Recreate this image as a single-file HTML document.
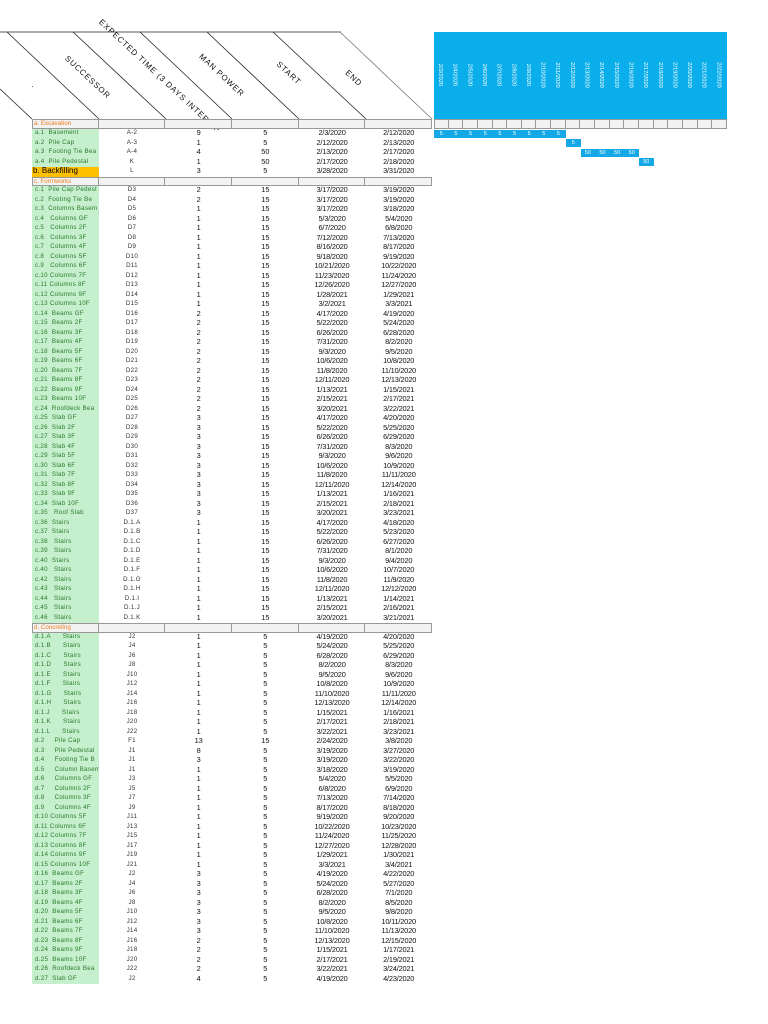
<!DOCTYPE html>
<html><head><meta charset="utf-8">
<style>
*{margin:0;padding:0;box-sizing:border-box}
body{width:768px;height:1024px;background:#fff;position:relative;overflow:hidden;font-family:"Liberation Sans",sans-serif}
#rows{position:absolute;left:32px;top:129px;width:400px}
.r{height:9.5px;display:flex;line-height:8px;white-space:pre}
.r span{width:66.7px;text-align:center;font-size:7.4px;color:#111;display:block}
.r span:nth-child(1){text-align:left;background:#c6efce;color:#2a7a2a;font-size:6.2px;padding-left:3px;letter-spacing:.3px;overflow:hidden}
.r span:nth-child(2){font-size:6.2px;color:#333;letter-spacing:.3px}
.r span:nth-child(5),.r span:nth-child(6){font-size:7.4px;letter-spacing:-.2px}
.h{height:9.5px;display:flex}
.h span{width:66.7px;height:9.5px;border:1px solid #999;background:#f2f2f2;font-size:6.2px;color:#f07d1e;line-height:7.5px;padding-left:1px;display:block}
.h span+span{border-left:none}
.r span.bf{background:#ffc000;color:#000;font-size:8px;padding-left:1px;letter-spacing:0}
#gh{position:absolute;left:434px;top:119px;display:flex}
#gh div{width:14.65px;height:10px;border:1px solid #999;border-left:none;background:#f2f2f2}
#gh div:first-child{border-left:1px solid #999}
.g{position:absolute;height:8px;background:#14a9e6;color:#fff;font-size:5.5px;line-height:8px;display:flex}
.g div{width:14.65px;text-align:center}
</style></head><body>
<svg width="768" height="130" style="position:absolute;left:0;top:0" xmlns="http://www.w3.org/2000/svg">
<rect x="434" y="32" width="293" height="87" fill="#0aaeea"/>
<g stroke="#222" stroke-width="0.8" fill="none">
<line x1="0" y1="32" x2="341" y2="32"/>
<line x1="0" y1="89" x2="32" y2="119"/>
<line x1="7" y1="32" x2="99" y2="119"/>
<line x1="73" y1="32" x2="166" y2="119"/>
<line x1="140" y1="32" x2="232" y2="119"/>
<line x1="207" y1="32" x2="299" y2="119"/>
<line x1="273" y1="32" x2="366" y2="119"/>
<line x1="340" y1="32" x2="432" y2="119" stroke="#777"/>
</g>
<g font-family="Liberation Sans" font-size="8" fill="#111" text-anchor="middle" letter-spacing="0.9">
<text x="0" y="0" transform="translate(86,79) rotate(43)">SUCCESSOR</text>
<text x="0" y="0" transform="translate(160,80) rotate(43)">EXPECTED TIME (3 DAYS INTERVAL)</text>
<text x="0" y="0" transform="translate(220,77) rotate(43)">MAN POWER</text>
<text x="0" y="0" transform="translate(287,75) rotate(43)">START</text>
<text x="0" y="0" transform="translate(352,80) rotate(43)">END</text>
<text x="33" y="87">.</text>
</g>
<g font-family="Liberation Sans" font-size="5.8" fill="#fff" text-anchor="middle">
<text transform="translate(439,75) rotate(90)">2/3/2020</text>
<text transform="translate(453.6,75) rotate(90)">2/4/2020</text>
<text transform="translate(468.3,75) rotate(90)">2/5/2020</text>
<text transform="translate(483,75) rotate(90)">2/6/2020</text>
<text transform="translate(497.6,75) rotate(90)">2/7/2020</text>
<text transform="translate(512.3,75) rotate(90)">2/8/2020</text>
<text transform="translate(526.9,75) rotate(90)">2/9/2020</text>
<text transform="translate(541.6,75) rotate(90)">2/10/2020</text>
<text transform="translate(556.2,75) rotate(90)">2/11/2020</text>
<text transform="translate(570.9,75) rotate(90)">2/12/2020</text>
<text transform="translate(585.5,75) rotate(90)">2/13/2020</text>
<text transform="translate(600.2,75) rotate(90)">2/14/2020</text>
<text transform="translate(614.8,75) rotate(90)">2/15/2020</text>
<text transform="translate(629.5,75) rotate(90)">2/16/2020</text>
<text transform="translate(644.1,75) rotate(90)">2/17/2020</text>
<text transform="translate(658.8,75) rotate(90)">2/18/2020</text>
<text transform="translate(673.4,75) rotate(90)">2/19/2020</text>
<text transform="translate(688.1,75) rotate(90)">2/20/2020</text>
<text transform="translate(702.7,75) rotate(90)">2/21/2020</text>
<text transform="translate(717.4,75) rotate(90)">2/22/2020</text>
</g>
</svg>
<div id="gh"><div></div><div></div><div></div><div></div><div></div><div></div><div></div><div></div><div></div><div></div><div></div><div></div><div></div><div></div><div></div><div></div><div></div><div></div><div></div><div></div></div>
<div class="g" style="left:434px;top:129.5px"><div>5</div><div>5</div><div>5</div><div>5</div><div>5</div><div>5</div><div>5</div><div>5</div><div>5</div></div>
<div class="g" style="left:566px;top:139px"><div>5</div></div>
<div class="g" style="left:580.5px;top:148.5px"><div>50</div><div>50</div><div>50</div><div>50</div></div>
<div class="g" style="left:639px;top:158px"><div>50</div></div>

<div class="h" style="position:absolute;left:32px;top:119px"><span>a. Excavation</span><span></span><span></span><span></span><span></span><span></span></div>
<div id="rows">
<div class="r"><span>a.1  Basement</span><span>A-2</span><span>9</span><span>5</span><span>2/3/2020</span><span>2/12/2020</span></div>
<div class="r"><span>a.2  Pile Cap</span><span>A-3</span><span>1</span><span>5</span><span>2/12/2020</span><span>2/13/2020</span></div>
<div class="r"><span>a.3  Footing Tie Bea</span><span>A-4</span><span>4</span><span>50</span><span>2/13/2020</span><span>2/17/2020</span></div>
<div class="r"><span>a.4  Pile Pedestal</span><span>K</span><span>1</span><span>50</span><span>2/17/2020</span><span>2/18/2020</span></div>
<div class="r"><span class="bf">b. Backfilling</span><span>L</span><span>3</span><span>5</span><span>3/28/2020</span><span>3/31/2020</span></div>
<div class="h"><span>c. Formworks</span><span></span><span></span><span></span><span></span><span></span></div>
<div class="r"><span>c.1  Pile Cap Pedest</span><span>D3</span><span>2</span><span>15</span><span>3/17/2020</span><span>3/19/2020</span></div>
<div class="r"><span>c.2  Footing Tie Be</span><span>D4</span><span>2</span><span>15</span><span>3/17/2020</span><span>3/19/2020</span></div>
<div class="r"><span>c.3  Columns Basem</span><span>D5</span><span>1</span><span>15</span><span>3/17/2020</span><span>3/18/2020</span></div>
<div class="r"><span>c.4   Columns GF</span><span>D6</span><span>1</span><span>15</span><span>5/3/2020</span><span>5/4/2020</span></div>
<div class="r"><span>c.5   Columns 2F</span><span>D7</span><span>1</span><span>15</span><span>6/7/2020</span><span>6/8/2020</span></div>
<div class="r"><span>c.6   Columns 3F</span><span>D8</span><span>1</span><span>15</span><span>7/12/2020</span><span>7/13/2020</span></div>
<div class="r"><span>c.7   Columns 4F</span><span>D9</span><span>1</span><span>15</span><span>8/16/2020</span><span>8/17/2020</span></div>
<div class="r"><span>c.8   Columns 5F</span><span>D10</span><span>1</span><span>15</span><span>9/18/2020</span><span>9/19/2020</span></div>
<div class="r"><span>c.9   Columns 6F</span><span>D11</span><span>1</span><span>15</span><span>10/21/2020</span><span>10/22/2020</span></div>
<div class="r"><span>c.10 Columns 7F</span><span>D12</span><span>1</span><span>15</span><span>11/23/2020</span><span>11/24/2020</span></div>
<div class="r"><span>c.11 Columns 8F</span><span>D13</span><span>1</span><span>15</span><span>12/26/2020</span><span>12/27/2020</span></div>
<div class="r"><span>c.12 Columns 9F</span><span>D14</span><span>1</span><span>15</span><span>1/28/2021</span><span>1/29/2021</span></div>
<div class="r"><span>c.13 Columns 10F</span><span>D15</span><span>1</span><span>15</span><span>3/2/2021</span><span>3/3/2021</span></div>
<div class="r"><span>c.14  Beams GF</span><span>D16</span><span>2</span><span>15</span><span>4/17/2020</span><span>4/19/2020</span></div>
<div class="r"><span>c.15  Beams 2F</span><span>D17</span><span>2</span><span>15</span><span>5/22/2020</span><span>5/24/2020</span></div>
<div class="r"><span>c.16  Beams 3F</span><span>D18</span><span>2</span><span>15</span><span>6/26/2020</span><span>6/28/2020</span></div>
<div class="r"><span>c.17  Beams 4F</span><span>D19</span><span>2</span><span>15</span><span>7/31/2020</span><span>8/2/2020</span></div>
<div class="r"><span>c.18  Beams 5F</span><span>D20</span><span>2</span><span>15</span><span>9/3/2020</span><span>9/5/2020</span></div>
<div class="r"><span>c.19  Beams 6F</span><span>D21</span><span>2</span><span>15</span><span>10/6/2020</span><span>10/8/2020</span></div>
<div class="r"><span>c.20  Beams 7F</span><span>D22</span><span>2</span><span>15</span><span>11/8/2020</span><span>11/10/2020</span></div>
<div class="r"><span>c.21  Beams 8F</span><span>D23</span><span>2</span><span>15</span><span>12/11/2020</span><span>12/13/2020</span></div>
<div class="r"><span>c.22  Beams 9F</span><span>D24</span><span>2</span><span>15</span><span>1/13/2021</span><span>1/15/2021</span></div>
<div class="r"><span>c.23  Beams 10F</span><span>D25</span><span>2</span><span>15</span><span>2/15/2021</span><span>2/17/2021</span></div>
<div class="r"><span>c.24  Roofdeck Bea</span><span>D26</span><span>2</span><span>15</span><span>3/20/2021</span><span>3/22/2021</span></div>
<div class="r"><span>c.25  Slab GF</span><span>D27</span><span>3</span><span>15</span><span>4/17/2020</span><span>4/20/2020</span></div>
<div class="r"><span>c.26  Slab 2F</span><span>D28</span><span>3</span><span>15</span><span>5/22/2020</span><span>5/25/2020</span></div>
<div class="r"><span>c.27  Slab 3F</span><span>D29</span><span>3</span><span>15</span><span>6/26/2020</span><span>6/29/2020</span></div>
<div class="r"><span>c.28  Slab 4F</span><span>D30</span><span>3</span><span>15</span><span>7/31/2020</span><span>8/3/2020</span></div>
<div class="r"><span>c.29  Slab 5F</span><span>D31</span><span>3</span><span>15</span><span>9/3/2020</span><span>9/6/2020</span></div>
<div class="r"><span>c.30  Slab 6F</span><span>D32</span><span>3</span><span>15</span><span>10/6/2020</span><span>10/9/2020</span></div>
<div class="r"><span>c.31  Slab 7F</span><span>D33</span><span>3</span><span>15</span><span>11/8/2020</span><span>11/11/2020</span></div>
<div class="r"><span>c.32  Slab 8F</span><span>D34</span><span>3</span><span>15</span><span>12/11/2020</span><span>12/14/2020</span></div>
<div class="r"><span>c.33  Slab 9F</span><span>D35</span><span>3</span><span>15</span><span>1/13/2021</span><span>1/16/2021</span></div>
<div class="r"><span>c.34  Slab 10F</span><span>D36</span><span>3</span><span>15</span><span>2/15/2021</span><span>2/18/2021</span></div>
<div class="r"><span>c.35   Roof Slab</span><span>D37</span><span>3</span><span>15</span><span>3/20/2021</span><span>3/23/2021</span></div>
<div class="r"><span>c.36  Stairs</span><span>D.1.A</span><span>1</span><span>15</span><span>4/17/2020</span><span>4/18/2020</span></div>
<div class="r"><span>c.37  Stairs</span><span>D.1.B</span><span>1</span><span>15</span><span>5/22/2020</span><span>5/23/2020</span></div>
<div class="r"><span>c.38   Stairs</span><span>D.1.C</span><span>1</span><span>15</span><span>6/26/2020</span><span>6/27/2020</span></div>
<div class="r"><span>c.39   Stairs</span><span>D.1.D</span><span>1</span><span>15</span><span>7/31/2020</span><span>8/1/2020</span></div>
<div class="r"><span>c.40  Stairs</span><span>D.1.E</span><span>1</span><span>15</span><span>9/3/2020</span><span>9/4/2020</span></div>
<div class="r"><span>c.40   Stairs</span><span>D.1.F</span><span>1</span><span>15</span><span>10/6/2020</span><span>10/7/2020</span></div>
<div class="r"><span>c.42   Stairs</span><span>D.1.G</span><span>1</span><span>15</span><span>11/8/2020</span><span>11/9/2020</span></div>
<div class="r"><span>c.43   Stairs</span><span>D.1.H</span><span>1</span><span>15</span><span>12/11/2020</span><span>12/12/2020</span></div>
<div class="r"><span>c.44   Stairs</span><span>D.1.I</span><span>1</span><span>15</span><span>1/13/2021</span><span>1/14/2021</span></div>
<div class="r"><span>c.45   Stairs</span><span>D.1.J</span><span>1</span><span>15</span><span>2/15/2021</span><span>2/16/2021</span></div>
<div class="r"><span>c.46   Stairs</span><span>D.1.K</span><span>1</span><span>15</span><span>3/20/2021</span><span>3/21/2021</span></div>
<div class="h"><span>d. Concreting</span><span></span><span></span><span></span><span></span><span></span></div>
<div class="r"><span>d.1.A      Stairs</span><span>J2</span><span>1</span><span>5</span><span>4/19/2020</span><span>4/20/2020</span></div>
<div class="r"><span>d.1.B      Stairs</span><span>J4</span><span>1</span><span>5</span><span>5/24/2020</span><span>5/25/2020</span></div>
<div class="r"><span>d.1.C      Stairs</span><span>J6</span><span>1</span><span>5</span><span>6/28/2020</span><span>6/29/2020</span></div>
<div class="r"><span>d.1.D      Stairs</span><span>J8</span><span>1</span><span>5</span><span>8/2/2020</span><span>8/3/2020</span></div>
<div class="r"><span>d.1.E      Stairs</span><span>J10</span><span>1</span><span>5</span><span>9/5/2020</span><span>9/6/2020</span></div>
<div class="r"><span>d.1.F      Stairs</span><span>J12</span><span>1</span><span>5</span><span>10/8/2020</span><span>10/9/2020</span></div>
<div class="r"><span>d.1.G      Stairs</span><span>J14</span><span>1</span><span>5</span><span>11/10/2020</span><span>11/11/2020</span></div>
<div class="r"><span>d.1.H      Stairs</span><span>J16</span><span>1</span><span>5</span><span>12/13/2020</span><span>12/14/2020</span></div>
<div class="r"><span>d.1.J      Stairs</span><span>J18</span><span>1</span><span>5</span><span>1/15/2021</span><span>1/16/2021</span></div>
<div class="r"><span>d.1.K      Stairs</span><span>J20</span><span>1</span><span>5</span><span>2/17/2021</span><span>2/18/2021</span></div>
<div class="r"><span>d.1.L      Stairs</span><span>J22</span><span>1</span><span>5</span><span>3/22/2021</span><span>3/23/2021</span></div>
<div class="r"><span>d.2     Pile Cap</span><span>F1</span><span>13</span><span>15</span><span>2/24/2020</span><span>3/8/2020</span></div>
<div class="r"><span>d.3     Pile Pedestal</span><span>J1</span><span>8</span><span>5</span><span>3/19/2020</span><span>3/27/2020</span></div>
<div class="r"><span>d.4     Footing Tie B</span><span>J1</span><span>3</span><span>5</span><span>3/19/2020</span><span>3/22/2020</span></div>
<div class="r"><span>d.5     Column Basem</span><span>J1</span><span>1</span><span>5</span><span>3/18/2020</span><span>3/19/2020</span></div>
<div class="r"><span>d.6     Columns GF</span><span>J3</span><span>1</span><span>5</span><span>5/4/2020</span><span>5/5/2020</span></div>
<div class="r"><span>d.7     Columns 2F</span><span>J5</span><span>1</span><span>5</span><span>6/8/2020</span><span>6/9/2020</span></div>
<div class="r"><span>d.8     Columns 3F</span><span>J7</span><span>1</span><span>5</span><span>7/13/2020</span><span>7/14/2020</span></div>
<div class="r"><span>d.9     Columns 4F</span><span>J9</span><span>1</span><span>5</span><span>8/17/2020</span><span>8/18/2020</span></div>
<div class="r"><span>d.10 Columns 5F</span><span>J11</span><span>1</span><span>5</span><span>9/19/2020</span><span>9/20/2020</span></div>
<div class="r"><span>d.11 Columns 6F</span><span>J13</span><span>1</span><span>5</span><span>10/22/2020</span><span>10/23/2020</span></div>
<div class="r"><span>d.12 Columns 7F</span><span>J15</span><span>1</span><span>5</span><span>11/24/2020</span><span>11/25/2020</span></div>
<div class="r"><span>d.13 Columns 8F</span><span>J17</span><span>1</span><span>5</span><span>12/27/2020</span><span>12/28/2020</span></div>
<div class="r"><span>d.14 Columns 9F</span><span>J19</span><span>1</span><span>5</span><span>1/29/2021</span><span>1/30/2021</span></div>
<div class="r"><span>d.15 Columns 10F</span><span>J21</span><span>1</span><span>5</span><span>3/3/2021</span><span>3/4/2021</span></div>
<div class="r"><span>d.16  Beams GF</span><span>J2</span><span>3</span><span>5</span><span>4/19/2020</span><span>4/22/2020</span></div>
<div class="r"><span>d.17  Beams 2F</span><span>J4</span><span>3</span><span>5</span><span>5/24/2020</span><span>5/27/2020</span></div>
<div class="r"><span>d.18  Beams 3F</span><span>J6</span><span>3</span><span>5</span><span>6/28/2020</span><span>7/1/2020</span></div>
<div class="r"><span>d.19  Beams 4F</span><span>J8</span><span>3</span><span>5</span><span>8/2/2020</span><span>8/5/2020</span></div>
<div class="r"><span>d.20  Beams 5F</span><span>J10</span><span>3</span><span>5</span><span>9/5/2020</span><span>9/8/2020</span></div>
<div class="r"><span>d.21  Beams 6F</span><span>J12</span><span>3</span><span>5</span><span>10/8/2020</span><span>10/11/2020</span></div>
<div class="r"><span>d.22  Beams 7F</span><span>J14</span><span>3</span><span>5</span><span>11/10/2020</span><span>11/13/2020</span></div>
<div class="r"><span>d.23  Beams 8F</span><span>J16</span><span>2</span><span>5</span><span>12/13/2020</span><span>12/15/2020</span></div>
<div class="r"><span>d.24  Beams 9F</span><span>J18</span><span>2</span><span>5</span><span>1/15/2021</span><span>1/17/2021</span></div>
<div class="r"><span>d.25  Beams 10F</span><span>J20</span><span>2</span><span>5</span><span>2/17/2021</span><span>2/19/2021</span></div>
<div class="r"><span>d.26  Roofdeck Bea</span><span>J22</span><span>2</span><span>5</span><span>3/22/2021</span><span>3/24/2021</span></div>
<div class="r"><span>d.27  Slab GF</span><span>J2</span><span>4</span><span>5</span><span>4/19/2020</span><span>4/23/2020</span></div>
</div>
</body></html>
